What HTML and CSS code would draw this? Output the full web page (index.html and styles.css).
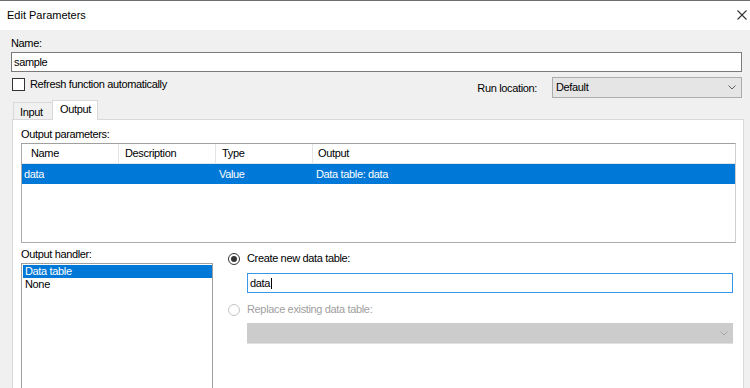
FILE: index.html
```html
<!DOCTYPE html>
<html>
<head>
<meta charset="utf-8">
<link rel="stylesheet" href="styles.css">
</head>
<body>
<div class="topline"></div>
<div class="titlebar">
  <span class="title">Edit Parameters</span>
  <svg class="close" width="10" height="10" viewBox="0 0 10 10"><path d="M0.5 0.5L9.5 9.5M9.5 0.5L0.5 9.5" stroke="#333" stroke-width="1.1" fill="none"/></svg>
</div>
<div class="content">
  <div class="line">Name:</div>
  <div class="text-input">sample</div>
  <div class="opt-row">
    <div class="check-group">
      <span class="checkbox"></span>
      <span class="line check-label">Refresh function automatically</span>
    </div>
    <div class="spacer"></div>
    <span class="run-label">Run location:</span>
    <div class="dropdown">
      <span class="dd-text">Default</span>
      <svg width="8" height="5" viewBox="0 0 8 5"><path d="M0.5 0.5L4 4L7.5 0.5" stroke="#606060" fill="none"/></svg>
    </div>
  </div>
  <div class="tabs">
    <div class="tab tab-inactive">Input</div>
    <div class="tab tab-active">Output</div>
  </div>
  <div class="panel">
    <div class="line">Output parameters:</div>
    <div class="table">
      <div class="thead">
        <div class="th first">Name</div>
        <div class="th">Description</div>
        <div class="th">Type</div>
        <div class="th last">Output</div>
      </div>
      <div class="trow selected">
        <div class="td first">data</div>
        <div class="td"></div>
        <div class="td">Value</div>
        <div class="td">Data table: data</div>
      </div>
    </div>
    <div class="lower">
      <div class="left">
        <div class="line">Output handler:</div>
        <div class="listbox">
          <div class="item selected">Data table</div>
          <div class="item">None</div>
        </div>
      </div>
      <div class="right">
        <div class="radio-row">
          <span class="radio checked"><span class="dot"></span></span>
          <span class="line">Create new data table:</span>
        </div>
        <div class="field">data<span class="caret"></span></div>
        <div class="radio-row disabled">
          <span class="radio"></span>
          <span class="line">Replace existing data table:</span>
        </div>
        <div class="dropdown-disabled">
          <svg width="8" height="5" viewBox="0 0 8 5"><path d="M0.5 0.5L4 4L7.5 0.5" stroke="#a6a6a6" fill="none"/></svg>
        </div>
      </div>
    </div>
  </div>
</div>
</body>
</html>
```
FILE: styles.css
```css
html, body {
  margin: 0;
  padding: 0;
}
body {
  width: 750px;
  height: 388px;
  overflow: hidden;
  display: flex;
  flex-direction: column;
  background: #f0f0f0;
  font-family: "Liberation Sans", Arial, sans-serif;
  font-size: 11px;
  letter-spacing: -0.35px;
  color: #000;
}
.topline {
  height: 1px;
  background: #6e6e6e;
}
.titlebar {
  height: 29px;
  background: #fff;
  display: flex;
  align-items: center;
  padding: 0 3px 0 7px;
}
.title {
  flex: 1;
  line-height: 13px;
  letter-spacing: 0;
  color: #000;
}
.close {
  display: block;
  margin-top: -1px;
}
.content {
  flex: 1;
  min-height: 0;
  display: flex;
  flex-direction: column;
  padding: 7px 8px 0 11px;
}
.line {
  line-height: 13px;
  white-space: nowrap;
}
.text-input {
  box-sizing: border-box;
  height: 20px;
  margin-top: 2px;
  border: 1px solid #7a7a7a;
  background: #fff;
  padding-left: 2px;
  line-height: 18px;
}
.opt-row {
  display: flex;
  margin-top: 5px;
  height: 21px;
}
.check-group {
  display: flex;
  align-items: flex-start;
  padding-top: 1px;
}
.checkbox {
  box-sizing: border-box;
  width: 13px;
  height: 13px;
  margin-left: 1px;
  border: 1px solid #333;
  background: #fff;
}
.check-label {
  margin-left: 5px;
}
.spacer {
  flex: 1;
}
.run-label {
  align-self: center;
  line-height: 13px;
  margin-right: 15px;
  margin-top: 2px;
}
.dropdown {
  box-sizing: border-box;
  width: 190px;
  height: 21px;
  background: #e5e5e5;
  border: 1px solid #adadad;
  display: flex;
  align-items: center;
  padding: 0 5px 0 3px;
}
.dd-text {
  flex: 1;
  line-height: 13px;
}
.tabs {
  display: flex;
  align-items: flex-end;
  height: 19px;
  margin-top: 2px;
  margin-left: 2px;
}
.tab {
  box-sizing: border-box;
  line-height: 13px;
  border-top: 1px solid #d9d9d9;
  border-left: 1px solid #d9d9d9;
}
.tab-inactive {
  width: 39px;
  height: 17px;
  padding: 3px 0 0 6px;
  background: #f0f0f0;
}
.tab-active {
  position: relative;
  z-index: 1;
  width: 46px;
  height: 20px;
  margin-bottom: -1px;
  padding: 2px 0 0 7px;
  background: #fff;
  border-right: 1px solid #d9d9d9;
}
.panel {
  flex: 1;
  min-height: 0;
  display: flex;
  flex-direction: column;
  box-sizing: border-box;
  margin-left: 1px;
  margin-right: -2px;
  border: 1px solid #d9d9d9;
  border-bottom: none;
  background: #fff;
  padding: 8px 7px 0 8px;
}
.table {
  box-sizing: border-box;
  height: 100px;
  margin-top: 2px;
  border: 1px solid;
  border-color: #a0a0a0 #cfcfcf #ababab #ababab;
  background: #fff;
}
.thead, .trow {
  display: grid;
  grid-template-columns: 97px 97px 97px 1fr;
}
.thead {
  height: 20px;
  box-sizing: border-box;
  border-bottom: 1px solid #e5e5e5;
}
.th {
  box-sizing: border-box;
  border-right: 1px solid #e5e5e5;
  padding-left: 6px;
  line-height: 19px;
  white-space: nowrap;
}
.th.first {
  padding-left: 9px;
}
.th.last {
  border-right: none;
  padding-left: 5px;
}
.trow {
  height: 20px;
}
.trow.selected {
  background: #0078d7;
  color: #fff;
}
.td {
  padding-left: 3px;
  line-height: 20px;
  white-space: nowrap;
}
.td.first {
  padding-left: 2px;
}
.lower {
  flex: 1;
  min-height: 0;
  display: flex;
  margin-top: 5px;
}
.left {
  width: 192px;
  display: flex;
  flex-direction: column;
}
.listbox {
  flex: 1;
  box-sizing: border-box;
  margin-top: 2px;
  border: 1px solid #a0a0a0;
  border-bottom: none;
  background: #fff;
  padding: 1px 0 0 1px;
}
.item {
  line-height: 13px;
  padding-left: 2px;
}
.item.selected {
  background: #0078d7;
  color: #fff;
}
.right {
  flex: 1;
  margin-left: 15px;
  padding-top: 4px;
  padding-right: 3px;
}
.radio-row {
  display: flex;
  align-items: center;
  height: 13px;
}
.radio {
  box-sizing: border-box;
  width: 12px;
  height: 12px;
  margin-right: 7px;
  border-radius: 50%;
  border: 1px solid #333;
  background: #fff;
  display: flex;
  align-items: center;
  justify-content: center;
}
.dot {
  width: 6px;
  height: 6px;
  border-radius: 50%;
  background: #333;
}
.field {
  box-sizing: border-box;
  height: 20px;
  margin: 8px 0 0 19px;
  border: 1px solid #3898e8;
  background: #fff;
  padding-left: 2px;
  line-height: 18px;
}
.caret {
  display: inline-block;
  width: 1px;
  height: 11px;
  margin-left: 1px;
  background: #000;
  vertical-align: -2px;
}
.radio-row.disabled {
  margin-top: 10px;
  color: #a0a0a0;
}
.radio-row.disabled .radio {
  border-color: #c4c4c4;
}
.dropdown-disabled {
  box-sizing: border-box;
  height: 21px;
  margin: 7px 0 0 19px;
  background: #cccccc;
  border-bottom: 1px solid #e0e0e0;
  display: flex;
  align-items: center;
  justify-content: flex-end;
  padding-right: 5px;
}
```
